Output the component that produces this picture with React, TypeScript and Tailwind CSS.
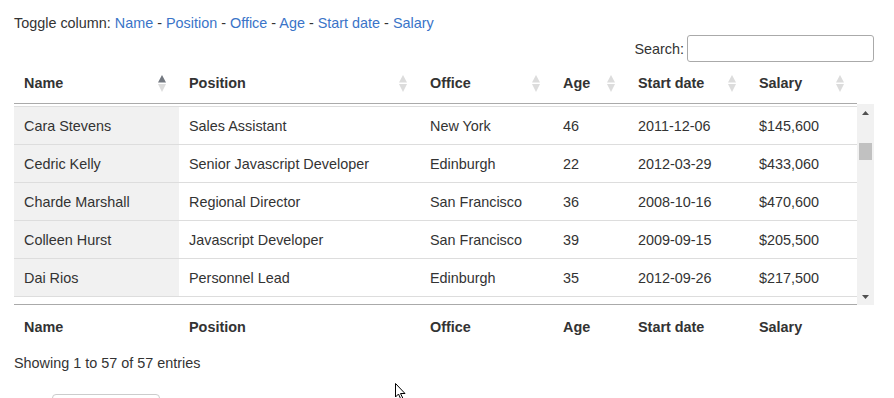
import React from 'react';

type Row = {
  name: string;
  position: string;
  office: string;
  age: number;
  start: string;
  salary: string;
};

const columns = ['Name', 'Position', 'Office', 'Age', 'Start date', 'Salary'];

const rows: Row[] = [
  { name: 'Cara Stevens', position: 'Sales Assistant', office: 'New York', age: 46, start: '2011-12-06', salary: '$145,600' },
  { name: 'Cedric Kelly', position: 'Senior Javascript Developer', office: 'Edinburgh', age: 22, start: '2012-03-29', salary: '$433,060' },
  { name: 'Charde Marshall', position: 'Regional Director', office: 'San Francisco', age: 36, start: '2008-10-16', salary: '$470,600' },
  { name: 'Colleen Hurst', position: 'Javascript Developer', office: 'San Francisco', age: 39, start: '2009-09-15', salary: '$205,500' },
  { name: 'Dai Rios', position: 'Personnel Lead', office: 'Edinburgh', age: 35, start: '2012-09-26', salary: '$217,500' },
];

const grid = 'grid grid-cols-[165px_241px_133px_75px_121px_108px]';

function SortIcon({ active }: { active?: boolean }) {
  return (
    <svg width="8" height="17" viewBox="0 0 8 17" className="shrink-0">
      <path d="M4 0 L8 7.5 L0 7.5 Z" fill={active ? '#737880' : '#dcdcdc'} />
      <path d="M0 9 L8 9 L4 17 Z" fill="#dcdcdc" />
    </svg>
  );
}

function Arrow({ down }: { down?: boolean }) {
  return (
    <div className="h-[17px] flex items-center justify-center">
      <svg width="7" height="4" viewBox="0 0 7 4">
        <path d={down ? 'M0 0 L7 0 L3.5 4 Z' : 'M3.5 0 L7 4 L0 4 Z'} fill="#505050" />
      </svg>
    </div>
  );
}

export default function App() {
  return (
    <div className="relative h-[398px] overflow-hidden bg-white text-[14.4px] leading-[16px] text-[#333] font-['Liberation_Sans',Arial,sans-serif]">
      <div className="pl-[14px] pr-[20px] pt-[15px]">
        <div>
          Toggle column:{' '}
          {columns.map((c, i) => (
            <span key={c}>
              <a className="text-[#3a74c8] cursor-pointer">{c}</a>
              {i < columns.length - 1 && ' - '}
            </span>
          ))}
        </div>

        <div className="flex justify-end items-center gap-[3px] mt-[4px]">
          <span>Search:</span>
          <input className="w-[187px] h-[27px] border border-[#aaa] rounded-[3px] bg-white outline-none" />
        </div>

        <div className="w-[843px]">
          <div className={`${grid} h-[42px] border-b border-[#aaa] font-bold`}>
            {columns.map((c, i) => (
              <div key={c} className="flex items-center justify-between pl-[10px] pr-[13px] pt-[1px]">
                <span>{c}</span>
                <SortIcon active={i === 0} />
              </div>
            ))}
          </div>
        </div>

        {/* scroll body: rows + drawn scrollbar */}
        <div className="flex w-[860px] -mr-[17px]">
          <div className="w-[843px] h-[201px] overflow-hidden pt-[2px] border-b border-[#aaa]">
            <div className="border-t border-[#ddd]">
              {rows.map(r => (
                <div key={r.name} className={`${grid} h-[38px] border-b border-[#ddd] items-center`}>
                  <div className="h-full flex items-center pl-[10px] bg-[#f1f1f1]">{r.name}</div>
                  <div className="pl-[10px]">{r.position}</div>
                  <div className="pl-[10px]">{r.office}</div>
                  <div className="pl-[10px]">{r.age}</div>
                  <div className="pl-[10px]">{r.start}</div>
                  <div className="pl-[10px]">{r.salary}</div>
                </div>
              ))}
            </div>
          </div>
          <div className="w-[17px] h-[201px] bg-[#f1f1f1] flex flex-col">
            <Arrow />
            <div className="mt-[22px] ml-[2px] w-[13px] h-[17px] bg-[#c1c1c1]" />
            <div className="flex-1" />
            <Arrow down />
          </div>
        </div>

        <div className={`${grid} w-[843px] h-[42px] font-bold`}>
          {columns.map(c => (
            <div key={c} className="flex items-center pl-[10px] pt-[1px]">
              {c}
            </div>
          ))}
        </div>

        <div className="mt-[8px]">Showing 1 to 57 of 57 entries</div>

        <div className="ml-[38px] mt-[23px] w-[108px] h-[30px] border border-[#ccc] rounded-[4px] bg-white" />
      </div>

      <svg
        className="absolute left-[395px] top-[383px]"
        width="12"
        height="18"
        viewBox="0 0 12 18"
      >
        <path d="M0.5 0.5 L0.5 14 L3.5 11 L6 16.5 L8 15.5 L5.5 10.5 L10 10.5 Z" fill="#fff" stroke="#000" strokeWidth="1" />
      </svg>
    </div>
  );
}
